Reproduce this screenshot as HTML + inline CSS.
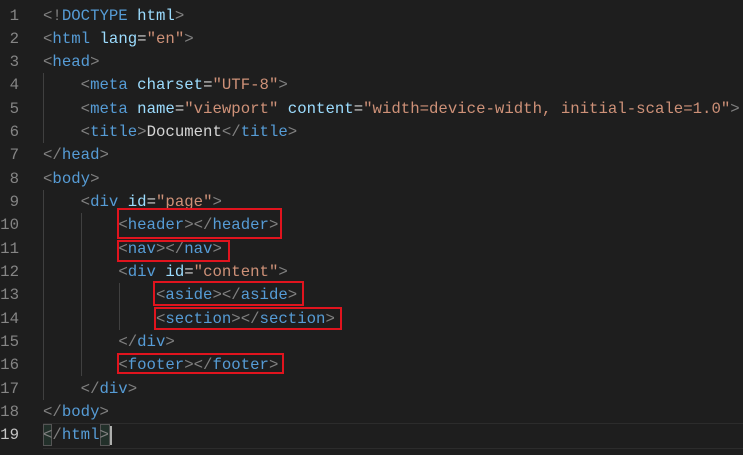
<!DOCTYPE html>
<html><head><style>
html,body{margin:0;padding:0;background:#1e1e1e;width:743px;height:455px;overflow:hidden}
body{position:relative;font-family:"Liberation Mono",monospace;font-size:15.7px}
.ln{position:absolute;left:0;width:19px;text-align:right;color:#858585;}
.l{position:absolute;left:43px;white-space:pre;color:#d4d4d4}
.b{color:#808080}.t{color:#569cd6}.a{color:#9cdcfe}.s{color:#ce9178}
.g{position:absolute;width:1px;background:#404040}
.r{position:absolute;border:2px solid #e0141e;box-sizing:border-box}
</style></head><body>
<div style="position:absolute;left:43px;right:0;top:423px;height:24px;border-top:1px solid #2c2c2c;border-bottom:1px solid #2c2c2c"></div>
<div style="position:absolute;left:43px;top:424px;width:9px;height:22px;border:1px solid #555;box-sizing:border-box;background:#22302a"></div>
<div style="position:absolute;left:100px;top:424px;width:10px;height:22px;border:1px solid #555;box-sizing:border-box;background:#22302a"></div>
<div style="position:absolute;left:110px;top:426px;width:2px;height:19px;background:#aeafad"></div>
<div class="g" style="left:43px;top:73px;height:70px"></div>
<div class="g" style="left:43px;top:190px;height:210px"></div>
<div class="g" style="left:81px;top:213px;height:163px"></div>
<div class="g" style="left:119px;top:283px;height:47px"></div>
<div id="c"></div>
<script>
var L=[
'<span class="b">&lt;!</span><span class="t">DOCTYPE</span> <span class="a">html</span><span class="b">&gt;</span>',
'<span class="b">&lt;</span><span class="t">html</span> <span class="a">lang</span>=<span class="s">"en"</span><span class="b">&gt;</span>',
'<span class="b">&lt;</span><span class="t">head</span><span class="b">&gt;</span>',
'    <span class="b">&lt;</span><span class="t">meta</span> <span class="a">charset</span>=<span class="s">"UTF-8"</span><span class="b">&gt;</span>',
'    <span class="b">&lt;</span><span class="t">meta</span> <span class="a">name</span>=<span class="s">"viewport"</span> <span class="a">content</span>=<span class="s">"width=device-width, initial-scale=1.0"</span><span class="b">&gt;</span>',
'    <span class="b">&lt;</span><span class="t">title</span><span class="b">&gt;</span>Document<span class="b">&lt;/</span><span class="t">title</span><span class="b">&gt;</span>',
'<span class="b">&lt;/</span><span class="t">head</span><span class="b">&gt;</span>',
'<span class="b">&lt;</span><span class="t">body</span><span class="b">&gt;</span>',
'    <span class="b">&lt;</span><span class="t">div</span> <span class="a">id</span>=<span class="s">"page"</span><span class="b">&gt;</span>',
'        <span class="b">&lt;</span><span class="t">header</span><span class="b">&gt;&lt;/</span><span class="t">header</span><span class="b">&gt;</span>',
'        <span class="b">&lt;</span><span class="t">nav</span><span class="b">&gt;&lt;/</span><span class="t">nav</span><span class="b">&gt;</span>',
'        <span class="b">&lt;</span><span class="t">div</span> <span class="a">id</span>=<span class="s">"content"</span><span class="b">&gt;</span>',
'            <span class="b">&lt;</span><span class="t">aside</span><span class="b">&gt;&lt;/</span><span class="t">aside</span><span class="b">&gt;</span>',
'            <span class="b">&lt;</span><span class="t">section</span><span class="b">&gt;&lt;/</span><span class="t">section</span><span class="b">&gt;</span>',
'        <span class="b">&lt;/</span><span class="t">div</span><span class="b">&gt;</span>',
'        <span class="b">&lt;</span><span class="t">footer</span><span class="b">&gt;&lt;/</span><span class="t">footer</span><span class="b">&gt;</span>',
'    <span class="b">&lt;/</span><span class="t">div</span><span class="b">&gt;</span>',
'<span class="b">&lt;/</span><span class="t">body</span><span class="b">&gt;</span>',
'<span class="b">&lt;/</span><span class="t">html</span><span class="b">&gt;</span>'];
var h='';
for(var i=0;i<L.length;i++){var y=6.5+i*23.33;
h+='<div class="ln" style="top:'+y+'px;'+(i==18?'color:#c6c6c6':'')+'">'+(i+1)+'</div><div class="l" style="top:'+y+'px">'+L[i]+'</div>';}
document.getElementById('c').innerHTML=h;
</script>
<div class="r" style="left:117px;top:208px;width:165px;height:31px"></div>
<div class="r" style="left:117px;top:240px;width:113px;height:22px"></div>
<div class="r" style="left:153px;top:281px;width:151px;height:25px"></div>
<div class="r" style="left:154px;top:307px;width:188px;height:23px"></div>
<div class="r" style="left:117px;top:353px;width:167px;height:21px"></div>
</body></html>
